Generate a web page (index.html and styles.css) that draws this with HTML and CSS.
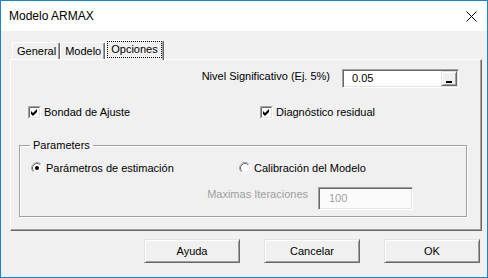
FILE: index.html
```html
<!DOCTYPE html>
<html lang="es">
<head>
<meta charset="utf-8">
<title>Modelo ARMAX</title>
<link rel="stylesheet" href="styles.css">
</head>
<body>
<div class="window">
  <div class="titlebar">
    <span class="title">Modelo ARMAX</span>
    <svg class="close" width="11" height="11" viewBox="0 0 11 11"><path d="M0.5 0.5L10.5 10.5M10.5 0.5L0.5 10.5" stroke="#000" stroke-width="1" fill="none"/></svg>
  </div>
  <div class="content">
    <div class="tabs">
      <div class="tab">General</div>
      <div class="tab">Modelo</div>
      <div class="tab active"><span class="focus">Opciones</span></div>
    </div>
    <div class="panel">
      <div class="row-nivel">
        <span class="label">Nivel Significativo (Ej. 5%)</span>
        <div class="field">
          <span>0.05</span>
          <div class="ellipsis"><span class="bar"></span></div>
        </div>
      </div>
      <div class="row-checks">
        <label class="check first">
          <svg width="13" height="13" viewBox="0 0 13 13"><rect width="13" height="13" fill="#fff"/><path d="M0.5 12.5V0.5H12.5" stroke="#a0a0a0" fill="none"/><path d="M1.5 11.5V1.5H11.5" stroke="#696969" fill="none"/><path d="M1.5 11.5H11.5V1.5" stroke="#e3e3e3" fill="none"/><polygon points="3,5 5,7 9,3 9,6 5,10 3,8" fill="#000"/></svg>
          <span>Bondad de Ajuste</span>
        </label>
        <label class="check">
          <svg width="13" height="13" viewBox="0 0 13 13"><rect width="13" height="13" fill="#fff"/><path d="M0.5 12.5V0.5H12.5" stroke="#a0a0a0" fill="none"/><path d="M1.5 11.5V1.5H11.5" stroke="#696969" fill="none"/><path d="M1.5 11.5H11.5V1.5" stroke="#e3e3e3" fill="none"/><polygon points="3,5 5,7 9,3 9,6 5,10 3,8" fill="#000"/></svg>
          <span>Diagnóstico residual</span>
        </label>
      </div>
      <fieldset class="group">
        <legend>Parameters</legend>
        <div class="row-radios">
          <label class="radio first">
            <svg width="12" height="12" viewBox="0 0 12 12"><circle cx="6" cy="6" r="5.5" fill="#fff" stroke="#fff"/><path d="M2.11 9.89A5.5 5.5 0 0 1 9.89 2.11" stroke="#a0a0a0" fill="none"/><path d="M2.82 9.18A4.5 4.5 0 0 1 9.18 2.82" stroke="#696969" fill="none"/><path d="M2.82 9.18A4.5 4.5 0 0 0 9.18 2.82" stroke="#e3e3e3" fill="none"/><circle cx="6" cy="6" r="2" fill="#000"/></svg>
            <span>Parámetros de estimación</span>
          </label>
          <label class="radio">
            <svg width="12" height="12" viewBox="0 0 12 12"><circle cx="6" cy="6" r="5.5" fill="#fff" stroke="#fff"/><path d="M2.11 9.89A5.5 5.5 0 0 1 9.89 2.11" stroke="#a0a0a0" fill="none"/><path d="M2.82 9.18A4.5 4.5 0 0 1 9.18 2.82" stroke="#696969" fill="none"/><path d="M2.82 9.18A4.5 4.5 0 0 0 9.18 2.82" stroke="#e3e3e3" fill="none"/></svg>
            <span>Calibración del Modelo</span>
          </label>
        </div>
        <div class="row-max">
          <span class="label disabled">Maximas Iteraciones</span>
          <div class="field-disabled">100</div>
        </div>
      </fieldset>
    </div>
    <div class="buttons">
      <div class="btn">Ayuda</div>
      <div class="btn">Cancelar</div>
      <div class="btn">OK</div>
    </div>
  </div>
</div>
</body>
</html>
```
FILE: styles.css
```css
html, body {
  margin: 0;
  padding: 0;
}
body {
  font-family: "Liberation Sans", Arial, sans-serif;
  font-size: 11px;
  line-height: 13px;
  color: #000;
  background: #f0f0f0;
}
.window {
  width: 488px;
  height: 278px;
  box-sizing: border-box;
  border: 1px solid #1883d7;
  background: #f0f0f0;
  display: flex;
  flex-direction: column;
}
.titlebar {
  height: 30px;
  background: #fff;
  display: flex;
  align-items: center;
  justify-content: space-between;
  padding: 0 10px 0 8px;
}
.title {
  font-size: 12px;
  line-height: 14px;
}
.close {
  display: block;
}
.content {
  padding: 9px 6px 0 9px;
}
.tabs {
  display: flex;
  align-items: flex-end;
  height: 19px;
  padding-left: 2px;
}
.tab {
  height: 17px;
  box-sizing: border-box;
  padding: 2px 3px 0 4px;
  border-top: 1px solid #fff;
  border-left: 1px solid #fff;
  border-right: 1px solid #696969;
  box-shadow: inset -1px 0 #a0a0a0;
  border-radius: 2px 2px 0 0;
}
.tab.active {
  height: 20px;
  margin-bottom: -1px;
  position: relative;
  z-index: 1;
  background: #f0f0f0;
  padding: 0 1px 0 1px;
}
.focus {
  display: block;
  height: 17px;
  box-sizing: border-box;
  border: 1px dotted #000;
  padding: 1px 3px 0 3px;
}
.panel {
  width: 472px;
  height: 172px;
  box-sizing: border-box;
  border-top: 1px solid #fff;
  border-left: 1px solid #fff;
  border-right: 1px solid #696969;
  border-bottom: 1px solid #696969;
  box-shadow: inset -1px -1px #a0a0a0;
}
.row-nivel {
  display: flex;
  justify-content: flex-end;
  align-items: flex-start;
  gap: 12px;
  margin-top: 9px;
  padding-right: 22px;
}
.row-nivel .label {
  margin-top: 1px;
}
.field {
  width: 117px;
  height: 19px;
  box-sizing: border-box;
  background: #fff;
  border-top: 1px solid #a0a0a0;
  border-left: 1px solid #a0a0a0;
  border-right: 1px solid #fff;
  border-bottom: 1px solid #fff;
  box-shadow: inset 1px 1px #696969, inset -1px -1px #e3e3e3;
  display: flex;
  align-items: center;
  padding: 0 1px 0 9px;
}
.ellipsis {
  margin-left: auto;
  width: 16px;
  height: 15px;
  box-sizing: border-box;
  background: #f0f0f0;
  border-top: 1px solid #e3e3e3;
  border-left: 1px solid #e3e3e3;
  border-right: 1px solid #696969;
  border-bottom: 1px solid #696969;
  box-shadow: inset 1px 1px #fff, inset -1px -1px #a0a0a0;
  display: flex;
  align-items: flex-end;
  justify-content: center;
  padding-bottom: 2px;
}
.bar {
  display: block;
  width: 6px;
  height: 2px;
  background: #000;
}
.row-checks {
  display: flex;
  align-items: center;
  margin-top: 17px;
  height: 14px;
}
.check, .radio {
  display: flex;
  align-items: center;
  gap: 3px;
}
.check svg, .radio svg {
  display: block;
  flex: none;
}
.check.first {
  margin-left: 17px;
  width: 232px;
}
.group {
  margin: 20px 0 0 8px;
  width: 448px;
  box-sizing: border-box;
  padding: 0 0 6px 0;
  border: 1px solid #a0a0a0;
  box-shadow: 1px 1px #fff, inset 1px 1px #fff;
  min-width: 0;
}
.group legend {
  margin-left: 10px;
  padding: 0 3px;
  line-height: 13px;
}
.row-radios {
  display: flex;
  align-items: center;
  height: 14px;
  margin-top: 9px;
  padding-left: 11px;
}
.radio.first {
  width: 208px;
}
.row-max {
  display: flex;
  justify-content: flex-end;
  align-items: flex-start;
  gap: 10px;
  margin-top: 12px;
  padding-right: 53px;
}
.row-max .label {
  margin-top: 1px;
}
.disabled {
  color: #a0a0a0;
}
.field-disabled {
  width: 95px;
  height: 23px;
  box-sizing: border-box;
  background: #fbfbfb;
  color: #a0a0a0;
  border-top: 1px solid #a0a0a0;
  border-left: 1px solid #a0a0a0;
  border-right: 1px solid #fff;
  border-bottom: 1px solid #fff;
  box-shadow: inset 1px 1px #696969, inset -1px -1px #e3e3e3;
  display: flex;
  align-items: center;
  padding-left: 10px;
}
.buttons {
  display: flex;
  justify-content: flex-end;
  gap: 24px;
  margin-top: 8px;
  padding-right: 1px;
}
.btn {
  width: 96px;
  height: 24px;
  box-sizing: border-box;
  background: #f0f0f0;
  border-top: 1px solid #e3e3e3;
  border-left: 1px solid #e3e3e3;
  border-right: 1px solid #696969;
  border-bottom: 1px solid #696969;
  box-shadow: inset 1px 1px #fff, inset -1px -1px #a0a0a0;
  display: flex;
  align-items: center;
  justify-content: center;
}
```
